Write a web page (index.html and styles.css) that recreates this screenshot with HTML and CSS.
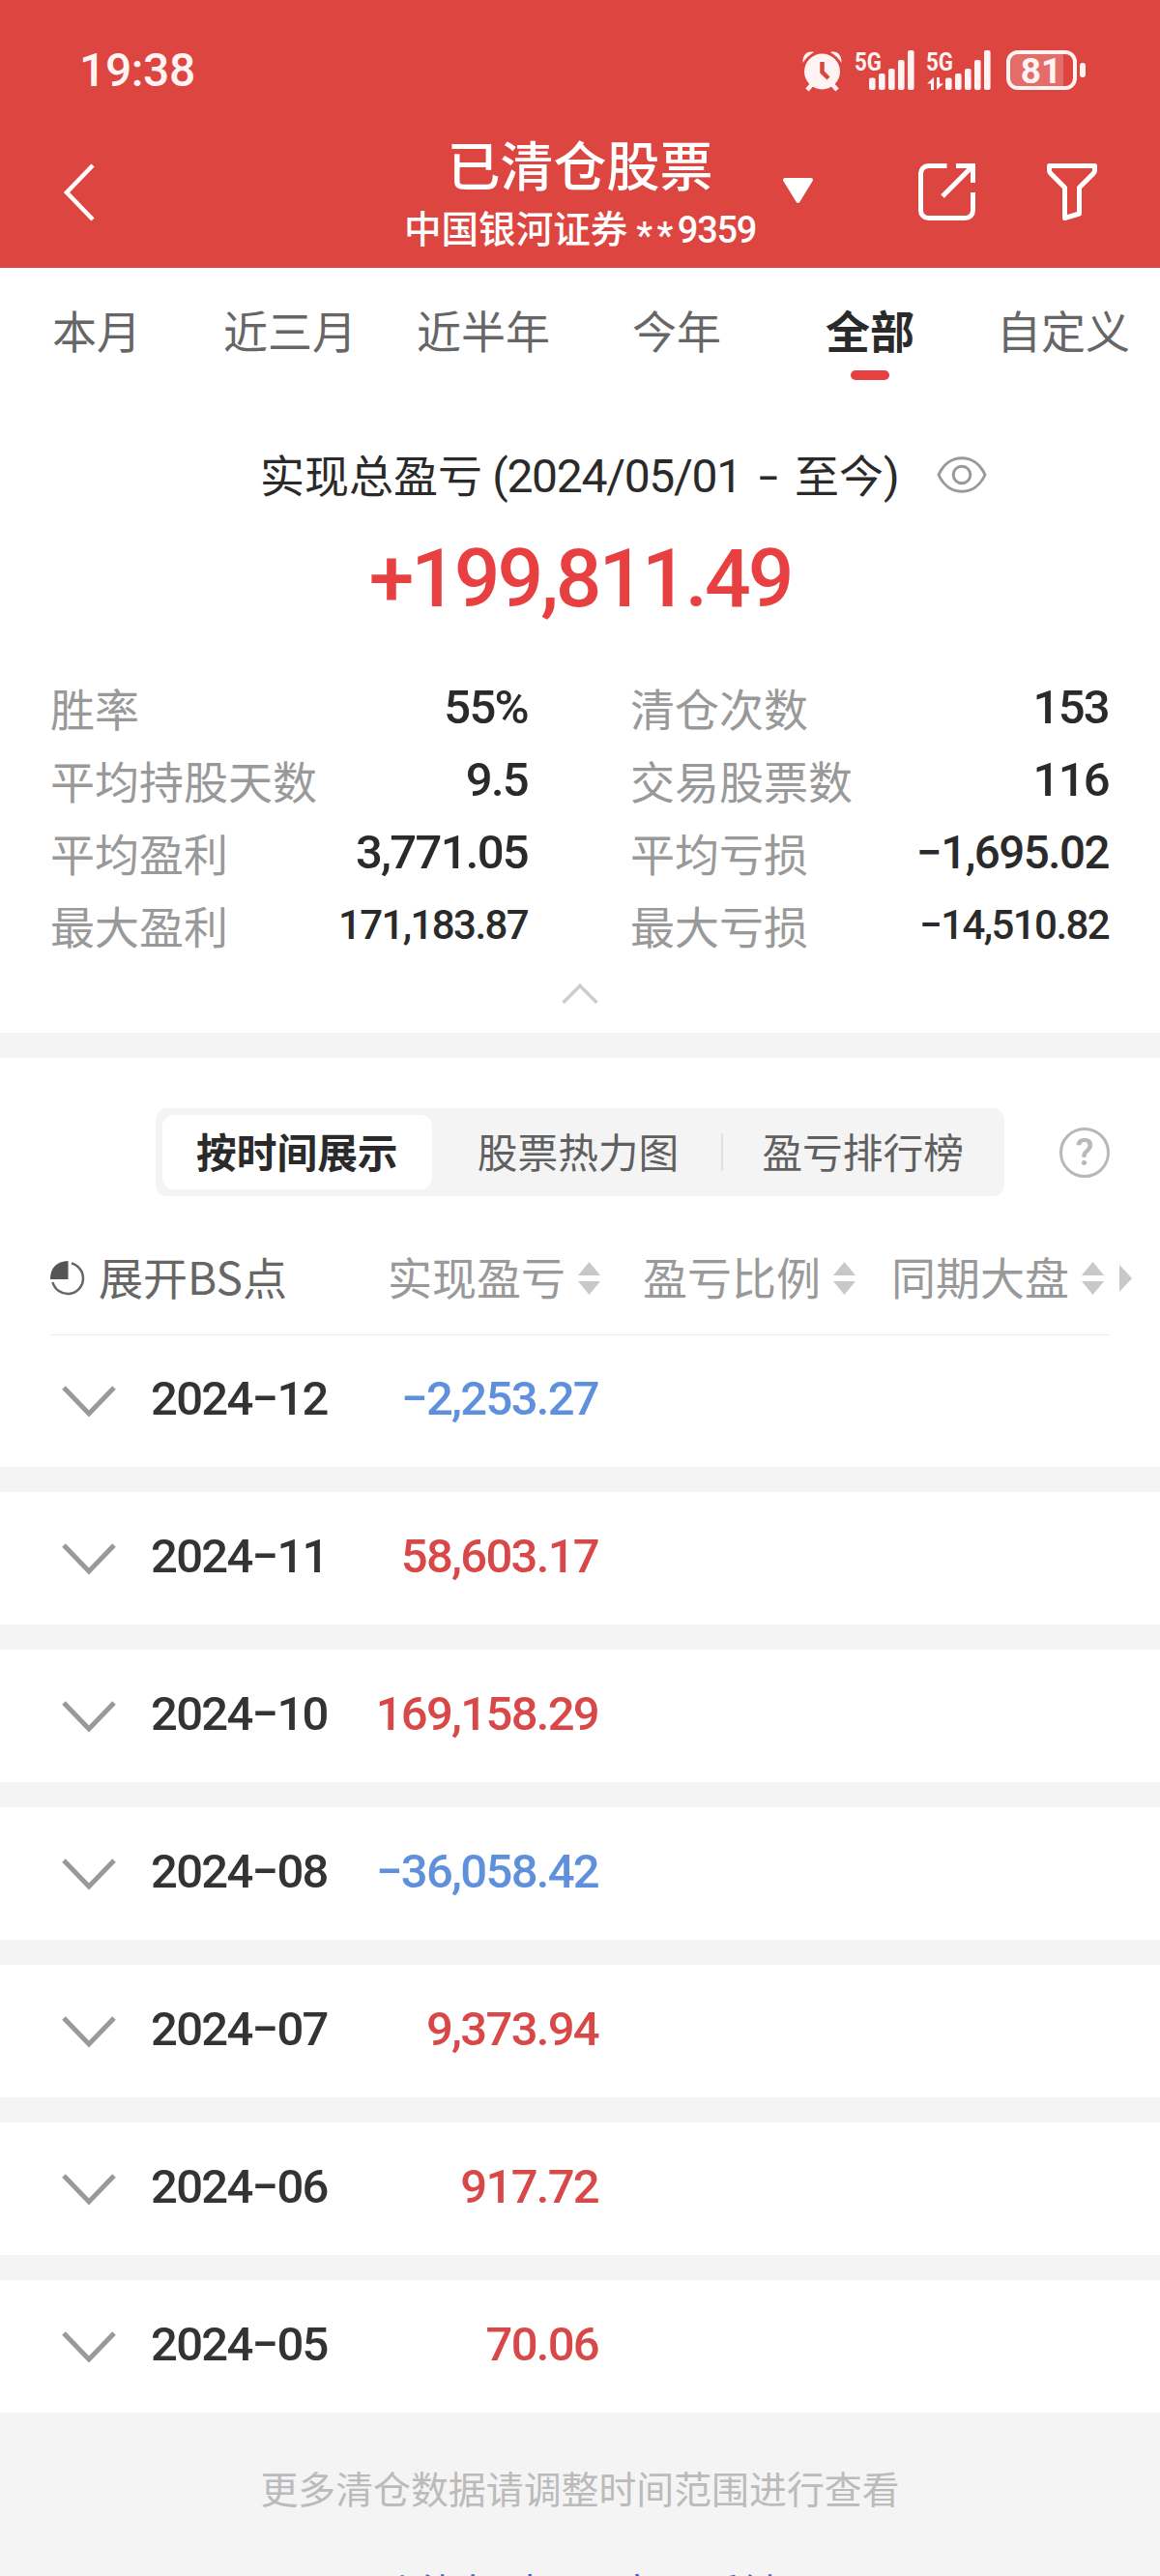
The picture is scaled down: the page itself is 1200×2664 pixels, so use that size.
FILE: index.html
```html
<!DOCTYPE html>
<html lang="zh-CN">
<head>
<meta charset="utf-8">
<title>已清仓股票</title>
<link rel="stylesheet" href="styles.css">
</head>
<body>
<svg class="defs" aria-hidden="true">
  <symbol id="sort" viewBox="0 0 23 34"><path d="M11.5 0L23 14H0z"/><path d="M11.5 34L23 20H0z"/></symbol>
  <symbol id="down" viewBox="0 0 56 34"><path d="M2 3L28 30L54 3" fill="none" stroke="#999" stroke-width="5"/></symbol>
</svg>
<header class="top">
  <div class="status">
    <span class="clock">19:38</span>
    <svg class="indicators" width="296" height="54" viewBox="829 41 296 54" fill="#fff3f3">
      <circle cx="850.500" cy="74" r="18.500"/>
      <path d="M835 93l6-7M866 93l-6-7" stroke="#fff3f3" stroke-width="4.500"/>
      <path d="M830.500 65C830 57 835 52 842 54Q835 58 830.500 65zM870.500 65C871 57 866 52 859 54Q866 58 870.500 65z"/>
      <path d="M850.500 64v10.500l6.500 6.500" fill="none" stroke="#dd4540" stroke-width="4.500"/>
      <text class="net" x="884" y="72.500" textLength="28" lengthAdjust="spacingAndGlyphs">5G</text>
      <rect x="899" y="80.500" width="6.600" height="12.500" rx="2"/><rect x="909" y="76" width="6.600" height="17" rx="2"/><rect x="919" y="71" width="6.600" height="22" rx="2"/><rect x="929" y="62" width="6.600" height="31" rx="2"/><rect x="939" y="52" width="6.600" height="41" rx="2"/>
      <text class="net" x="958" y="72.500" textLength="28" lengthAdjust="spacingAndGlyphs">5G</text>
      <path d="M959 86.500l7-6.500v13h-3v-6.500zM976 86.500l-7 6.500v-13h3v6.500z"/>
      <rect x="978" y="80.500" width="6.600" height="12.500" rx="2"/><rect x="988" y="76" width="6.600" height="17" rx="2"/><rect x="998" y="71" width="6.600" height="22" rx="2"/><rect x="1008" y="62" width="6.600" height="31" rx="2"/><rect x="1018" y="52" width="6.600" height="41" rx="2"/>
      <path d="M1053 55.500h47v34h-47q-8 0-8-8v-18q0-8 8-8z" fill="#e46d6a"/>
      <rect x="1043" y="54" width="69" height="37" rx="10" fill="none" stroke="#fff3f3" stroke-width="4"/>
      <rect x="1117" y="65" width="6" height="15" rx="3"/>
      <text class="level" x="1077" y="86" text-anchor="middle">81</text>
    </svg>
  </div>
  <div class="nav">
    <svg class="back" width="34" height="60" viewBox="0 0 34 60"><path d="M31 2L4 30L31 58" fill="none" stroke="#fff" stroke-width="4.500"/></svg>
    <div class="heading">
      <h1>已清仓股票</h1>
      <p>中国银河证券 <span class="num"><span class="mask">**</span>9359</span></p>
    </div>
    <div class="actions">
      <svg class="caret" width="33" height="27" viewBox="0 0 33 27"><path d="M3 2h27L16.500 24z" fill="#fff" stroke="#fff" stroke-width="4" stroke-linejoin="round"/></svg>
      <svg class="share" width="59" height="59" viewBox="0 0 59 59" fill="none" stroke="#fff" stroke-width="5"><path d="M29.500 2.500H10.500a8 8 0 0 0-8 8V48.500a8 8 0 0 0 8 8H48.500a8 8 0 0 0 8-8V30M39 2.500H56.500V20M56 3L25 34"/></svg>
      <svg class="filter" width="52" height="59" viewBox="0 0 52 59" fill="none" stroke="#fff" stroke-width="5" stroke-linejoin="round"><path d="M2.500 2.500H49.500V7Q49.500 9 48 10.500L33.500 25V52L18.500 56.500V25L4 10.500Q2.500 9 2.500 7z"/></svg>
    </div>
  </div>
</header>

<nav class="tabs">
  <a>本月</a><a>近三月</a><a>近半年</a><a>今年</a><a class="on">全部</a><a>自定义</a>
</nav>

<section class="summary">
  <div class="caption">
    <span>实现总盈亏 <span class="num">(2024/05/01 <i>-</i> </span>至今<span class="num">)</span></span>
    <svg width="52" height="38" viewBox="0 0 52 38" fill="none" stroke="#999" stroke-width="3"><path d="M2 19C7 8 16 1.800 26 1.800S45 8 50 19C45 30 36 36.200 26 36.200S7 30 2 19z"/><circle cx="26" cy="19" r="8.800"/></svg>
  </div>
  <div class="total num">+199,811.49</div>
  <dl class="stats">
    <div><dt>胜率</dt><dd class="num">55%</dd></div>
    <div><dt>清仓次数</dt><dd class="num">153</dd></div>
    <div><dt>平均持股天数</dt><dd class="num">9.5</dd></div>
    <div><dt>交易股票数</dt><dd class="num">116</dd></div>
    <div><dt>平均盈利</dt><dd class="num">3,771.05</dd></div>
    <div><dt>平均亏损</dt><dd class="num medium">−1,695.02</dd></div>
    <div><dt>最大盈利</dt><dd class="num small">171,183.87</dd></div>
    <div><dt>最大亏损</dt><dd class="num small">−14,510.82</dd></div>
  </dl>
  <svg class="fold" width="38" height="22" viewBox="0 0 38 22"><path d="M1.500 20L19 2.500L36.500 20" fill="none" stroke="#ccc" stroke-width="3.500"/></svg>
</section>

<section class="panel">
  <div class="switch">
    <div class="segments"><a class="on">按时间展示</a><a>股票热力图</a><a>盈亏排行榜</a></div>
    <span class="help">?</span>
  </div>
  <div class="columns">
    <span class="expand"><svg width="36" height="36" viewBox="0 0 36 36"><path d="M18.500 0V19H0Q0 1 18.500 0z" fill="#555"/><path d="M22 2.500A16 16 0 1 1 2.500 22" fill="none" stroke="#666" stroke-width="2.500"/></svg><span>展开BS点</span></span>
    <span class="col c1"><span>实现盈亏</span><svg width="23" height="34"><use href="#sort"/></svg></span>
    <span class="col c2"><span>盈亏比例</span><svg width="23" height="34"><use href="#sort"/></svg></span>
    <span class="col c3"><span>同期大盘</span><svg width="23" height="34"><use href="#sort"/></svg></span>
    <svg class="more" width="13" height="28" viewBox="0 0 13 28"><path d="M0 0L13 14L0 28z"/></svg>
  </div>
</section>

<ul class="months num">
  <li><svg width="56" height="34"><use href="#down"/></svg><span>2024−12</span><b class="loss">−2,253.27</b></li>
  <li><svg width="56" height="34"><use href="#down"/></svg><span>2024−11</span><b>58,603.17</b></li>
  <li><svg width="56" height="34"><use href="#down"/></svg><span>2024−10</span><b>169,158.29</b></li>
  <li><svg width="56" height="34"><use href="#down"/></svg><span>2024−08</span><b class="loss">−36,058.42</b></li>
  <li><svg width="56" height="34"><use href="#down"/></svg><span>2024−07</span><b>9,373.94</b></li>
  <li><svg width="56" height="34"><use href="#down"/></svg><span>2024−06</span><b>917.72</b></li>
  <li><svg width="56" height="34"><use href="#down"/></svg><span>2024−05</span><b>70.06</b></li>
</ul>

<footer class="foot">
  <p>更多清仓数据请调整时间范围进行查看</p>
  <div class="links"><a>功能帮助</a><a>意见反馈</a></div>
</footer>
</body>
</html>
```
FILE: styles.css
```css
* { box-sizing: border-box; margin: 0; padding: 0; }
html, body { height: 2664px; overflow: hidden; }
body {
  width: 1200px;
  background: #f4f4f4;
  color: #2a2a2a;
  font-family: "Noto Sans CJK SC", sans-serif;
  font-size: 46px;
  line-height: 60px;
  white-space: nowrap;
}
svg { display: block; flex: none; }
.defs { display: none; }
.num { font-family: Roboto, "Noto Sans CJK SC", sans-serif; }

.top { height: 277px; background: #dd4540; color: #fff; }
.status {
  display: flex;
  justify-content: space-between;
  height: 130px;
  padding: 41px 75px 0 82px;
}
.clock {
  font: 500 48px/64px Roboto, sans-serif;
  letter-spacing: -0.4px;
  color: #fff3f3;
}
.net { font: 700 26px Roboto, sans-serif; }
.level { font: 700 37px Roboto, sans-serif; }
.nav { display: grid; grid-template-columns: 1fr 366px 1fr; height: 147px; }
.back { margin: 39px 0 0 65px; }
.heading { text-align: center; padding-top: 3px; }
.heading h1 { font-size: 55px; font-weight: 500; line-height: 70px; }
.heading p { font-size: 38.6px; font-weight: 500; line-height: 62px; }
.heading .num { font-size: 38px; letter-spacing: -1.3px; }
.heading .mask { display: inline-block; letter-spacing: 4.5px; line-height: 1; transform: translateY(6px); }
.actions { display: flex; align-items: flex-start; padding-left: 26px; }
.caret { margin-top: 54px; }
.share { margin: 39px 74px 0 108px; }
.filter { margin-top: 39px; }

.tabs {
  display: grid;
  grid-template-columns: repeat(6, 200px);
  height: 143px;
  padding-top: 33px;
  background: #fff;
  color: #666;
  text-align: center;
}
.tabs .on { color: #2a2a2a; font-weight: 700; }
.tabs .on::after {
  content: "";
  display: block;
  width: 40px;
  height: 10px;
  margin: 13px auto 0;
  border-radius: 5px;
  background: #e83f41;
}

.summary { height: 648px; padding-top: 41px; background: #fff; }
.caption { display: flex; align-items: center; height: 60px; padding-left: 269px; }
.caption > span { width: 700px; padding-bottom: 1px; }
.caption .num { font-size: 48px; letter-spacing: -1.3px; }
.caption i { display: inline-block; font-style: normal; transform: scaleX(1.5); padding: 0 7px; margin: 0 4px 0 4px; }
.total {
  height: 100px;
  margin-top: 28px;
  color: #e83f41;
  font-size: 84px;
  font-weight: 500;
  line-height: 100px;
  letter-spacing: -3.1px;
  text-align: center;
}
.stats {
  display: grid;
  grid-template-columns: 494px 495px;
  column-gap: 106px;
  grid-auto-rows: 75px;
  margin-top: 46px;
  padding-left: 52px;
}
.stats div { display: flex; justify-content: space-between; align-items: center; }
.stats dt { color: #999; padding-bottom: 4px; }
.stats dd { padding-bottom: 1px; font-size: 49px; font-weight: 500; letter-spacing: -1.7px; }
.stats dd.medium { font-size: 47.5px; letter-spacing: -1.5px; }
.stats dd.small { font-size: 42px; letter-spacing: -1.6px; }
.fold { margin: 22px auto 0; }

.panel { height: 286px; margin-top: 26px; padding-top: 52px; background: #fff; }
.switch { display: flex; align-items: center; padding-left: 161px; }
.segments {
  display: grid;
  grid-template-columns: repeat(3, 1fr);
  width: 878px;
  height: 91px;
  border-radius: 12px;
  background: #f4f4f4;
  color: #606060;
  font-size: 41.7px;
  line-height: 75px;
  text-align: center;
}
.segments a { height: 77px; margin: 7px; }
.segments .on { border-radius: 12px; background: #fff; color: #2a2a2a; font-weight: 700; }
.segments a:nth-child(2) { padding-right: 4px; }
.segments a:last-child {
  margin-left: 0;
  padding-left: 7px;
  background: linear-gradient(#e0e0e0, #e0e0e0) 0 50% / 2px 39px no-repeat;
}
.help {
  width: 52px;
  height: 52px;
  margin-left: 57px;
  border: 3px solid #b8b8b8;
  border-radius: 50%;
  color: #b8b8b8;
  font: 500 39px/46px Roboto, sans-serif;
  text-align: center;
}
.columns {
  display: flex;
  align-items: center;
  width: 1148px;
  height: 117px;
  margin: 26px 0 0 52px;
  color: #999;
  fill: #c8c8c8;
}
.expand, .col { display: flex; align-items: center; }
.expand span, .col span { padding-bottom: 5px; }
.expand { gap: 14px; width: 349px; color: #666; }
.col svg { margin-left: 13px; }
.c1 { width: 264px; }
.c2 { width: 257px; }
.c3 { width: 236px; }

.months { list-style: none; background: #f4f4f4; font-size: 49px; font-weight: 500; letter-spacing: -1.7px; }
.months li {
  display: flex;
  align-items: center;
  height: 137px;
  margin-bottom: 26px;
  padding-left: 64px;
  background: #fff;
}
.months li:first-child {
  background: linear-gradient(#ebebeb, #ebebeb) 52px 0 / 1096px 1px no-repeat #fff;
}
.months span { width: 200px; margin-left: 36px; padding-bottom: 3px; color: #333; }
.months b { width: 263px; padding-bottom: 3px; color: #d94848; font-weight: 500; text-align: right; }
.months .loss { color: #5f90dc; }

.foot { margin-top: -26px; padding-top: 47px; text-align: center; }
.foot p { color: #bbb; font-size: 38.900px; }
.links { display: flex; justify-content: center; gap: 75px; margin-top: 49px; color: #4c61b2; font-size: 43.500px; }
```
